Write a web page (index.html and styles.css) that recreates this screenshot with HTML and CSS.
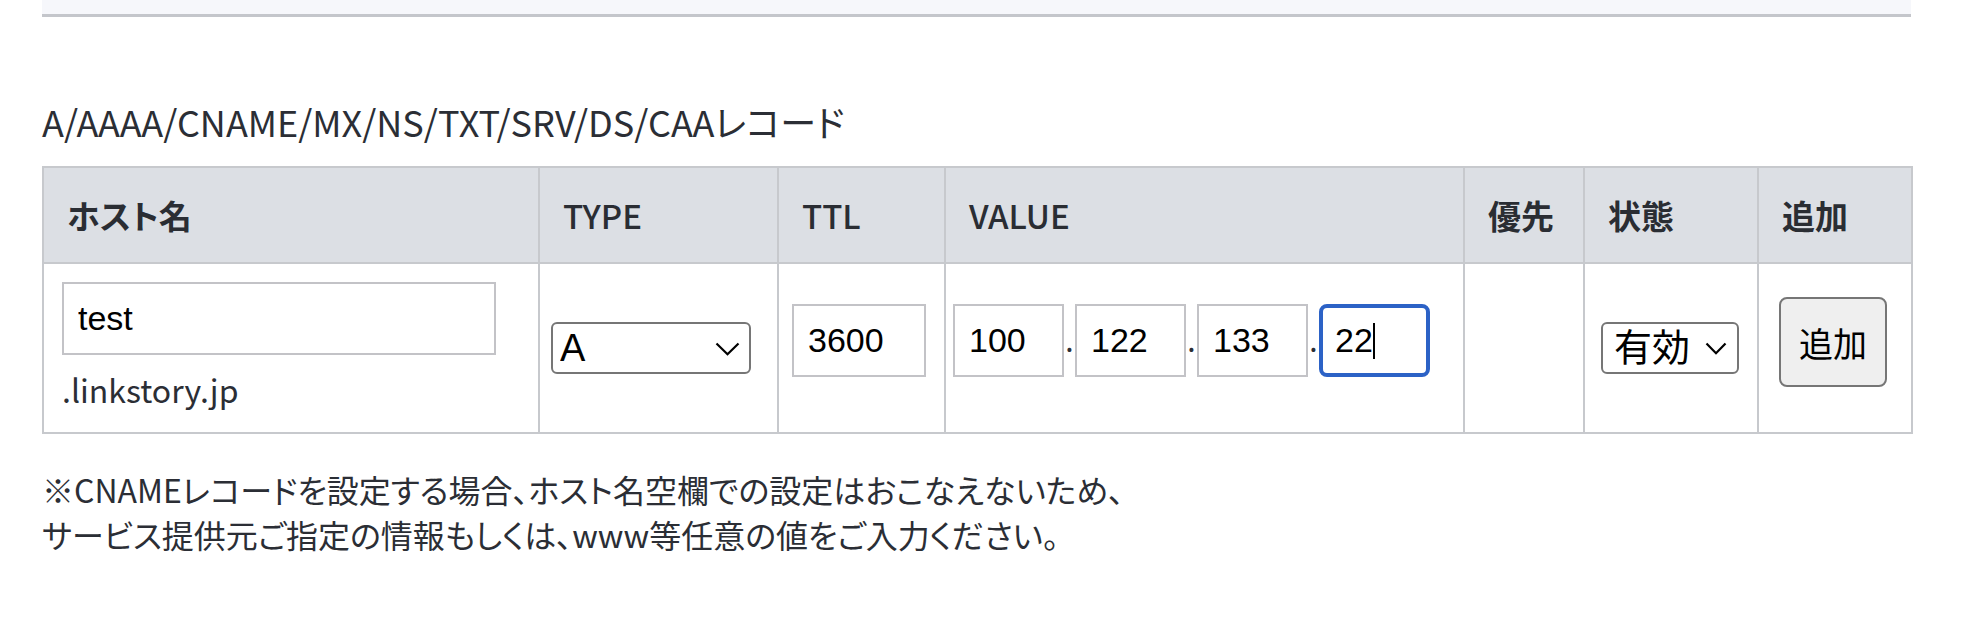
FILE: index.html
```html
<!DOCTYPE html>
<html lang="ja">
<head>
<meta charset="utf-8">
<title>DNSレコード</title>
<link rel="stylesheet" href="styles.css">
</head>
<body>
<div class="page">
  <div class="topbar"></div>
  <h2 class="title">A/AAAA/CNAME/MX/NS/TXT/SRV/DS/CAAレコード</h2>
  <table class="records">
    <colgroup>
      <col class="w-host"><col class="w-type"><col class="w-ttl"><col class="w-value"><col class="w-prio"><col class="w-state"><col class="w-add">
    </colgroup>
    <thead>
      <tr class="head-row"><th>ホスト名</th><th class="latin">TYPE</th><th class="latin">TTL</th><th class="latin">VALUE</th><th>優先</th><th>状態</th><th>追加</th></tr>
    </thead>
    <tbody>
      <tr class="body-row">
        <td class="c-host"><input class="field host" type="text" value="test"><div class="domain">.linkstory.jp</div></td>
        <td class="c-type"><span class="select-wrap"><select class="sel type"><option>A</option><option>AAAA</option><option>CNAME</option></select><svg class="chev chev-type" viewBox="0 0 25 14"><polyline points="1.5,1.5 12.5,12.2 23.5,1.5"/></svg></span></td>
        <td class="c-ttl"><input class="field ttl" type="text" value="3600"></td>
        <td class="c-value"><div class="ip"><input class="field oct" type="text" value="100"><span class="dot">.</span><input class="field oct" type="text" value="122"><span class="dot">.</span><input class="field oct" type="text" value="133"><span class="dot">.</span><span class="focus-wrap"><input class="field oct focus" type="text" value="22"><span class="caret"></span></span></div></td>
        <td class="c-prio"></td>
        <td class="c-state"><span class="select-wrap"><select class="sel state"><option>有効</option><option>無効</option></select><svg class="chev chev-state" viewBox="0 0 22 13"><polyline points="1.5,1.5 11,11.2 20.5,1.5"/></svg></span></td>
        <td class="c-add"><button class="btn" type="button">追加</button></td>
      </tr>
    </tbody>
  </table>
  <p class="note">※CNAMEレコードを設定する場合、ホスト名空欄での設定はおこなえないため、<br>サービス提供元ご指定の情報もしくは、www等任意の値をご入力ください。</p>
</div>
</body>
</html>
```
FILE: styles.css
```css
html, body {
  margin: 0;
  padding: 0;
  background: #ffffff;
}
body {
  font-family: "Noto Sans CJK JP", "Noto Sans", sans-serif;
  font-feature-settings: "palt";
  color: #2b2e35;
}
.page {
  padding-left: 42px;
  width: 1869px;
}
.topbar {
  height: 14px;
  background: #f6f7fb;
  border-bottom: 3px solid #c4c6cb;
}
.title {
  margin: 80px 0 21px;
  font-size: 36px;
  font-weight: 400;
  line-height: 48px;
  color: #2b2e35;
}
.records {
  width: 1869px;
  table-layout: fixed;
  border-collapse: collapse;
  border: 2px solid #c7c9cd;
}
.w-host { width: 496px; }
.w-type { width: 239px; }
.w-ttl { width: 167px; }
.w-value { width: 519px; }
.w-prio { width: 120px; }
.w-state { width: 174px; }
.w-add { width: 154px; }
.head-row { height: 96px; }
.body-row { height: 170px; }
.records th,
.records td {
  border: 2px solid #c7c9cd;
  padding: 0;
}
.records th {
  background: #dcdfe4;
  text-align: left;
  padding-left: 23px;
  font-size: 33px;
  font-weight: 700;
  color: #2a2d33;
}
.records th.latin {
  font-weight: 500;
}
.records td {
  vertical-align: middle;
}
.records td.c-host {
  padding-left: 18px;
  vertical-align: top;
  padding-top: 18px;
}
.records td.c-type { padding-left: 11px; }
.records td.c-ttl { padding-left: 13px; }
.records td.c-value { padding-left: 7px; }
.records td.c-state { padding-left: 16px; }
.records td.c-add { padding-left: 20px; }

.field {
  box-sizing: border-box;
  height: 73px;
  border: 2px solid #c3c3c7;
  border-radius: 0;
  padding: 0 14px;
  margin: 0;
  font-family: "Liberation Sans", Arial, sans-serif;
  font-size: 34px;
  color: #000000;
  background: #ffffff;
  outline: none;
}
.field.host {
  display: block;
  width: 434px;
}
.domain {
  margin-top: 12px;
  font-size: 32px;
  line-height: 44px;
  color: #2b2e35;
}
.field.ttl {
  display: block;
  width: 134px;
  margin-bottom: 15px;
}
.ip {
  display: flex;
  align-items: baseline;
  margin-bottom: 15px;
}
.field.oct {
  width: 111px;
}
.dot {
  width: 11px;
  text-align: center;
  font-size: 30px;
  line-height: 40px;
  color: #2b2e35;
}
.focus-wrap {
  position: relative;
  display: inline-block;
}
.field.focus {
  display: block;
  border: 4px solid #2c62c6;
  border-radius: 8px;
  padding-left: 12px;
}
.caret {
  position: absolute;
  left: 54px;
  top: 19px;
  width: 2px;
  height: 36px;
  background: #000000;
}
.select-wrap {
  position: relative;
  display: inline-block;
  vertical-align: middle;
}
.sel {
  -webkit-appearance: none;
  appearance: none;
  box-sizing: border-box;
  display: block;
  height: 52px;
  border: 2px solid #767676;
  border-radius: 6px;
  background: #ffffff;
  color: #000000;
  font-family: "Liberation Sans", "Noto Sans CJK JP", sans-serif;
  font-size: 38px;
  padding: 0 0 0 7px;
  margin: 0;
}
.sel.type { width: 200px; }
.sel.state { width: 138px; padding-left: 11px; }
.chev {
  position: absolute;
  top: 20px;
  fill: none;
  stroke: #000000;
  stroke-width: 2.2;
  pointer-events: none;
}
.chev-type { right: 11px; width: 25px; height: 14px; }
.chev-state { right: 12px; width: 22px; height: 13px; }
.btn {
  box-sizing: border-box;
  display: block;
  width: 108px;
  height: 90px;
  margin: 0 0 12px;
  padding: 0;
  background: #efefef;
  border: 2px solid #767676;
  border-radius: 8px;
  font-family: "Noto Sans CJK JP", sans-serif;
  font-size: 34px;
  color: #000000;
}
.note {
  margin: 33px 0 0;
  font-size: 32px;
  line-height: 45px;
  color: #2b2e35;
}
```
